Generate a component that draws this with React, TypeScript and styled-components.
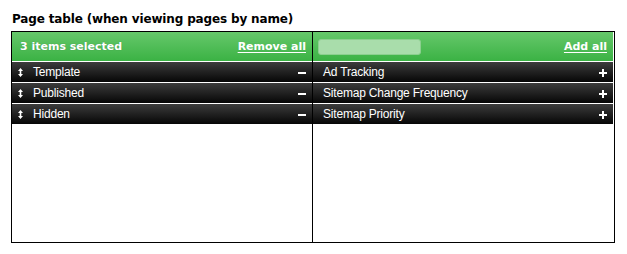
import React from "react";
import styled, { createGlobalStyle } from "styled-components";

const Global = createGlobalStyle`
  html, body { margin: 0; padding: 0; background: #fff; }
  body { font-family: "DejaVu Sans", "Liberation Sans", sans-serif; }
`;

const Page = styled.div`
  padding: 11px 0 0 11px;
  width: 604px;
`;

const Title = styled.h2`
  margin: 0 0 4px 1px;
  font-family: "DejaVu Sans", sans-serif;
  font-weight: bold;
  font-size: 12px;
  letter-spacing: -0.15px;
  line-height: 16px;
  color: #000;
`;

const Table = styled.div`
  display: grid;
  grid-template-columns: 301px 300px;
  border: 1px solid #000;
  height: 210px;
`;

const Column = styled.div<{ $divider?: boolean }>`
  display: flex;
  flex-direction: column;
  border-right: ${(p) => (p.$divider ? "1px solid #000" : "none")};
  min-width: 0;
`;

const Header = styled.div`
  height: 29px;
  display: flex;
  align-items: center;
  justify-content: space-between;
  padding: 0 6px 0 8px;
  background: linear-gradient(#66c86b, #3bb244);
  color: #fff;
  font-family: "DejaVu Sans", sans-serif;
  font-weight: bold;
  font-size: 11px;
`;

const Count = styled.span`
  text-shadow: 0 0 1px rgba(0, 0, 0, 0.25);
`;

const HeaderLink = styled.a`
  color: #fff;
  text-decoration: underline;
  text-underline-offset: 2px;
  cursor: pointer;
`;

const Search = styled.input`
  width: 103px;
  height: 16px;
  box-sizing: border-box;
  margin-left: -3px;
  border: 1px solid #8ccf8f;
  border-radius: 3px;
  background: #a9ddab;
  outline: none;
`;

const Row = styled.div`
  height: 20px;
  border-top: 1px solid #fff;
  display: flex;
  align-items: center;
  padding: 0 6px 0 6px;
  background: linear-gradient(#3c3c3c, #060606);
  color: #fff;
  font-family: "Liberation Sans", sans-serif;
  font-size: 12px;
  letter-spacing: -0.2px;
`;

const Label = styled.span<{ $indent?: boolean }>`
  flex: 1;
  padding-left: ${(p) => (p.$indent ? "0" : "4px")};
  white-space: nowrap;
`;

const Handle = styled.svg`
  width: 5px;
  height: 9px;
  margin: 0 10px 0 0;
  flex: none;
`;

const Sign = styled.svg`
  width: 8px;
  height: 8px;
  flex: none;
  margin-top: 2px;
`;

const Arrows = () => (
  <Handle viewBox="0 0 5 9">
    <path d="M2.5 0 L5 3 L3.3 3 L3.3 6 L5 6 L2.5 9 L0 6 L1.7 6 L1.7 3 L0 3 Z" fill="#fff" />
  </Handle>
);

const Minus = () => (
  <Sign viewBox="0 0 8 8">
    <rect x="0" y="3" width="8" height="2" fill="#fff" />
  </Sign>
);

const Plus = () => (
  <Sign viewBox="0 0 8 8">
    <rect x="0" y="3" width="8" height="2" fill="#fff" />
    <rect x="3" y="0" width="2" height="8" fill="#fff" />
  </Sign>
);

const selected = ["Template", "Published", "Hidden"];
const available = ["Ad Tracking", "Sitemap Change Frequency", "Sitemap Priority"];

export default function App() {
  return (
    <>
      <Global />
      <Page>
        <Title>Page table (when viewing pages by name)</Title>
        <Table>
          <Column $divider>
            <Header>
              <Count>3 items selected</Count>
              <HeaderLink>Remove all</HeaderLink>
            </Header>
            {selected.map((s) => (
              <Row key={s}>
                <Arrows />
                <Label $indent>{s}</Label>
                <Minus />
              </Row>
            ))}
          </Column>
          <Column>
            <Header>
              <Search />
              <HeaderLink>Add all</HeaderLink>
            </Header>
            {available.map((s) => (
              <Row key={s}>
                <Label>{s}</Label>
                <Plus />
              </Row>
            ))}
          </Column>
        </Table>
      </Page>
    </>
  );
}
